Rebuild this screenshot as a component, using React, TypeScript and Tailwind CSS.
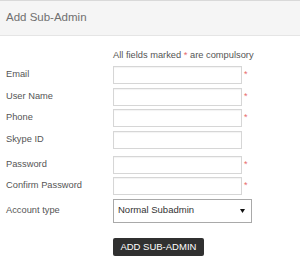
import React from "react";

const font = { fontFamily: '"Liberation Sans", Arial, sans-serif' };

function Star() {
  return <span className="ml-[2px] self-start mt-[4px] text-[9px] leading-[9px] text-[#e86a6a]">*</span>;
}

function Row({ label, req, className = "" }: { label: string; req?: boolean; className?: string }) {
  return (
    <div className={"flex items-center h-[18px] " + className}>
      <div className="w-[107px] text-[9.3px] text-[#555]">{label}</div>
      <div className="w-[129px] h-[18px] border border-[#d6d6d6] bg-white shadow-[inset_0_1px_1px_rgba(0,0,0,0.05)]" />
      {req && <Star />}
    </div>
  );
}

export default function App() {
  return (
    <div className="w-[300px] h-[272px] bg-white overflow-hidden" style={font}>
      <div className="h-[36px] bg-[#f5f5f5] border-t border-b border-t-[#d9d9d9] border-b-[#e5e5e5] flex items-center pl-[6px] text-[11.5px] text-[#707070]">
        Add Sub-Admin
      </div>
      <div className="pl-[6px]">
        <div className="pl-[107px] mt-[14px] h-[10px] text-[9.3px] leading-[10px] text-[#555]">
          All fields marked <span className="text-[#e86a6a]">*</span> are compulsory
        </div>
        <div className="flex flex-col gap-[3.5px] mt-[6px]">
          <Row label="Email" req />
          <Row label="User Name" req />
          <Row label="Phone" req />
          <Row label="Skype ID" />
          <Row label="Password" req className="mt-[3.5px]" />
          <Row label="Confirm Password" req />
          <div className="flex items-center h-[24px]">
            <div className="w-[107px] text-[9.3px] text-[#555]">Account type</div>
            <div className="w-[139px] h-[24px] border border-[#a9a9a9] bg-white flex items-center pl-[4px] pr-[6px] text-[9.5px] text-[#333]">
              <span className="flex-1">Normal Subadmin</span>
              <svg width="5" height="4" viewBox="0 0 5 4">
                <path d="M0 0 L5 0 L2.5 4 Z" fill="#111" />
              </svg>
            </div>
          </div>
        </div>
        <div className="flex pl-[107px] mt-[15.5px]">
          <button className="h-[18px] px-[7.4px] bg-[#303030] rounded-[2px] text-white text-[9.5px] leading-[18px]" style={font}>
            ADD SUB-ADMIN
          </button>
        </div>
      </div>
    </div>
  );
}
